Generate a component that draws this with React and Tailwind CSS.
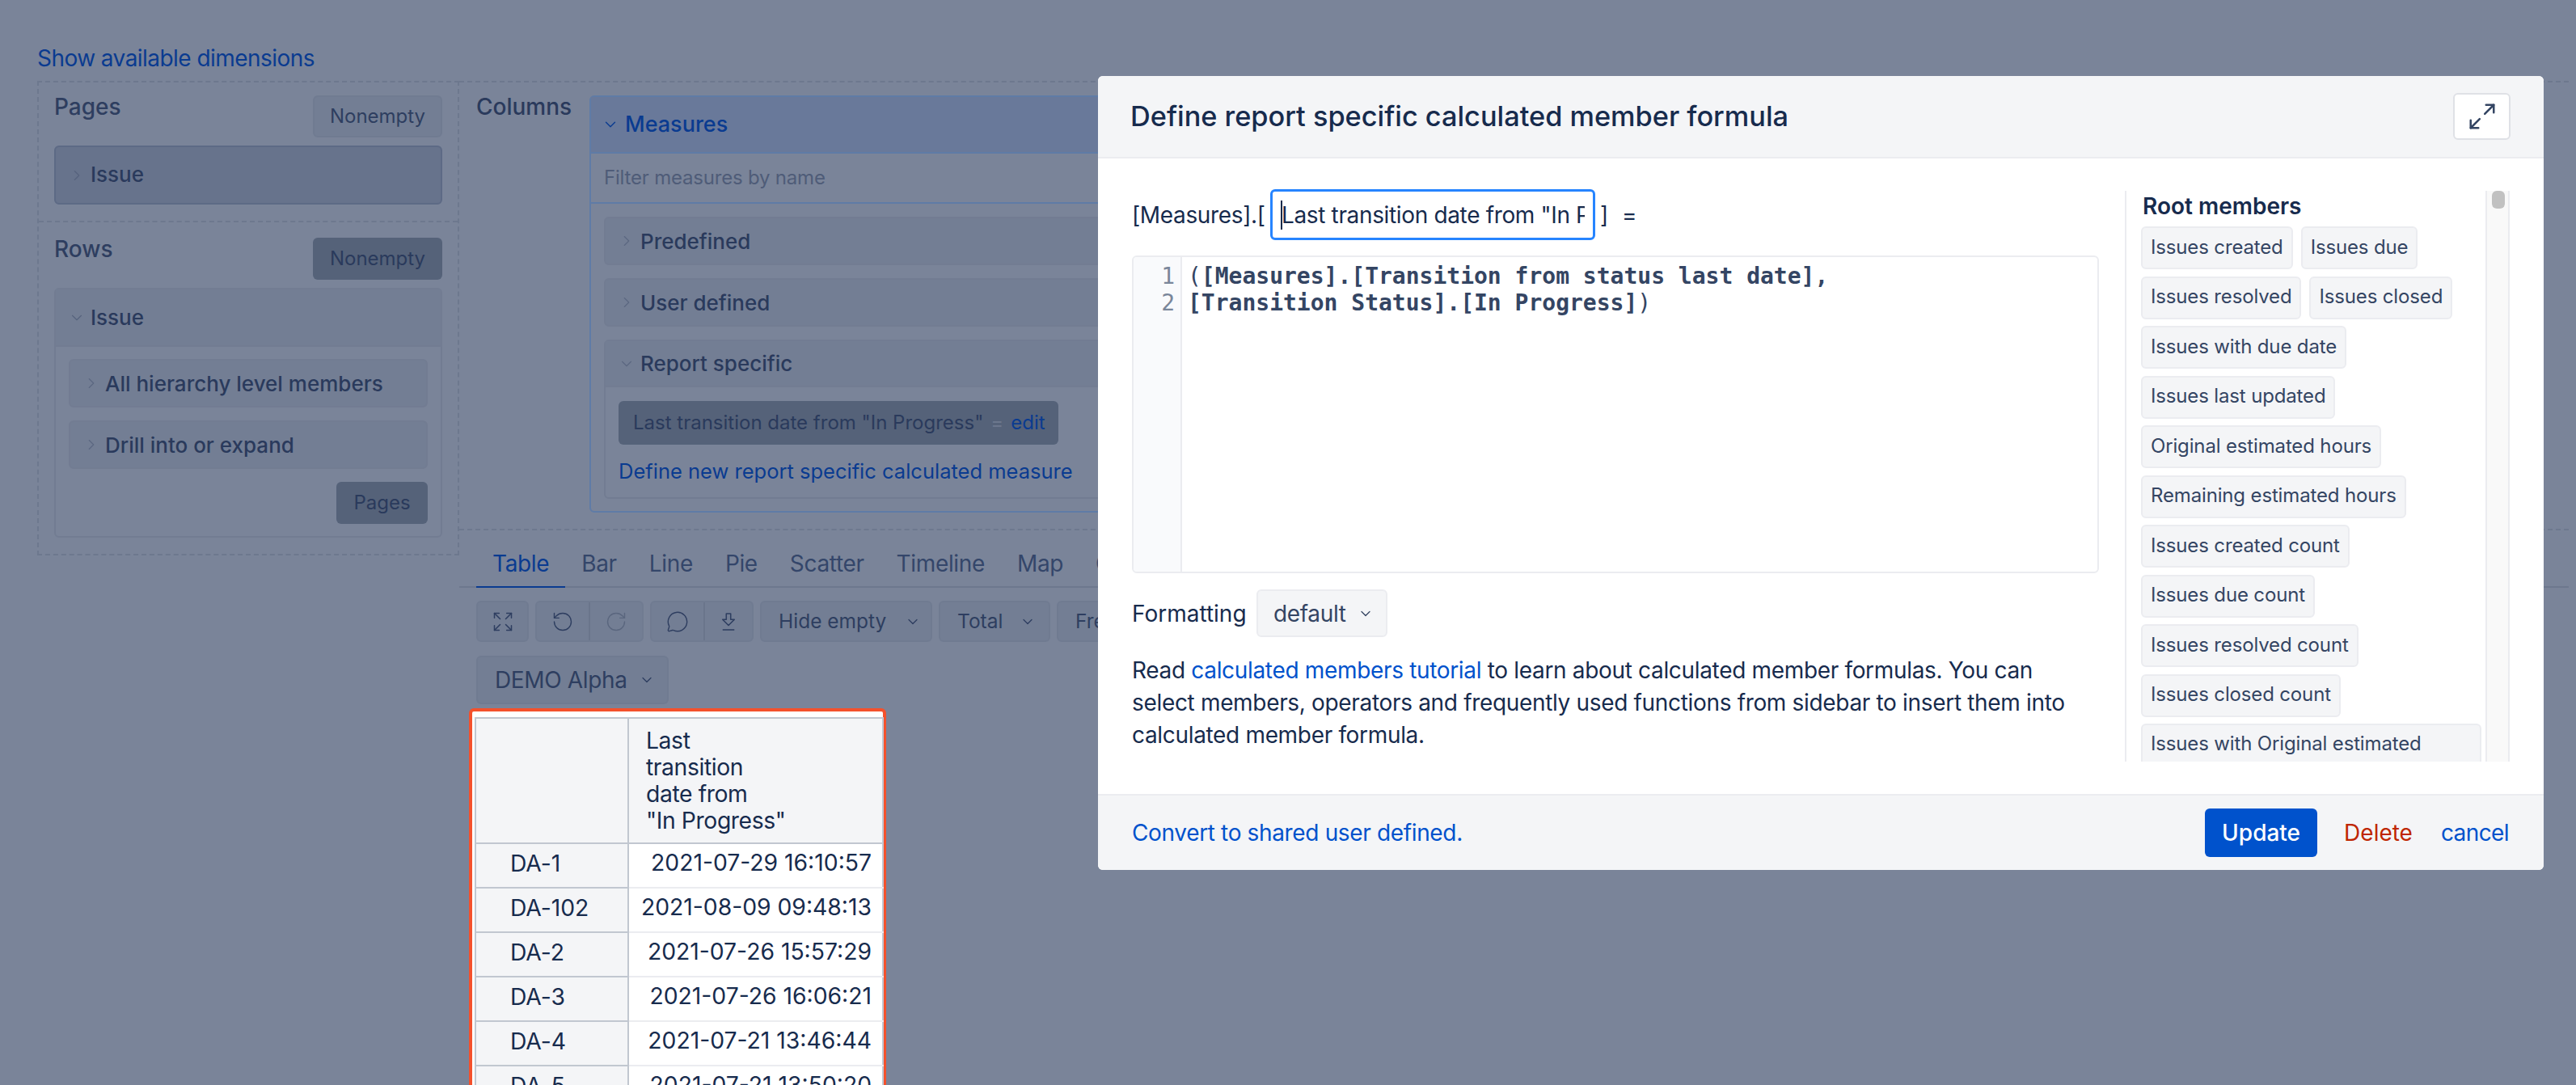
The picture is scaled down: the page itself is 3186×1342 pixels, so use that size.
import React from "react";
import { ChevronRight, ChevronDown, Expand, RotateCcw, RotateCw, MessageCircle, Maximize2 } from "lucide-react";

const DimText = "text-[#2a3a5c]";

function Block({ label, className = "" }) {
  return (
    <div className={"flex items-center border-2 border-[#727c92] rounded-[6px] bg-[#737e94] " + className}>
      <ChevronRight className="w-[22px] h-[22px] ml-[15px] text-[#5b6780] shrink-0" strokeWidth={1.2} />
      <span className="ml-[6px] text-[26px] text-[#2a3a5c] font-medium">{label}</span>
    </div>
  );
}

function ToolBtn({ children, className = "" }) {
  return (
    <div className={"flex items-center h-[51px] rounded-[6px] border-2 border-[#707b91] bg-[#737e94] text-[#2e3e60] " + className}>
      {children}
    </div>
  );
}

const rows = [
  ["DA-1", "2021-07-29 16:10:57"],
  ["DA-102", "2021-08-09 09:48:13"],
  ["DA-2", "2021-07-26 15:57:29"],
  ["DA-3", "2021-07-26 16:06:21"],
  ["DA-4", "2021-07-21 13:46:44"],
  ["DA-5", "2021-07-21 13:50:20"],
];

const chips = [
  "Issues created",
  "Issues due",
  "Issues resolved",
  "Issues closed",
  "Issues with due date",
  "Issues last updated",
  "Original estimated hours",
  "Remaining estimated hours",
  "Issues created count",
  "Issues due count",
  "Issues resolved count",
  "Issues closed count",
];

function Background() {
  return (
    <div className="pl-[46px] pt-[54px]">
      <a className="block h-[46px] leading-[36px] text-[28px] tracking-[-0.55px] text-[#0a3b90]">Show available dimensions</a>
      <div className="flex items-start">
        {/* left column */}
        <div className="w-[522px] h-[587px] border-2 border-dashed border-[#6d788e] shrink-0">
          <div className="h-[173px] border-b-2 border-dashed border-[#6d788e] px-[19px] pt-[16px]">
            <div className="flex justify-between">
              <span className="text-[28px] leading-[28px] text-[#2e3e60] font-medium">Pages</span>
              <div className="flex items-center justify-center w-[160px] h-[52px] rounded-[6px] border-2 border-[#707b91] bg-[#737e94] text-[24px] text-[#2e3e60]">Nonempty</div>
            </div>
            <div className="mt-[10px] flex items-center h-[73px] rounded-[6px] border-2 border-[#5d6a85] bg-[#67738c]">
              <ChevronRight className="w-[22px] h-[22px] ml-[15px] text-[#56637d]" strokeWidth={1.2} />
              <span className="ml-[6px] text-[26px] pb-[2px] text-[#2a3a5c] font-medium">Issue</span>
            </div>
          </div>
          <div className="px-[19px] pt-[19px]">
            <div className="flex justify-between">
              <span className="text-[28px] leading-[28px] text-[#2e3e60] font-medium">Rows</span>
              <div className="flex items-center justify-center w-[160px] h-[52px] rounded-[6px] bg-[#556279] text-[24px] text-[#2a3a5c]">Nonempty</div>
            </div>
            <div className="mt-[10px] h-[309px] rounded-[6px] border-2 border-[#727c92]">
              <div className="flex items-center h-[71px] bg-[#737e94] border-b-2 border-[#727c92]">
                <ChevronDown className="w-[22px] h-[22px] ml-[15px] text-[#56637d]" strokeWidth={1.2} />
                <span className="ml-[6px] text-[26px] text-[#2a3a5c] font-medium">Issue</span>
              </div>
              <div className="px-[16px] pt-[15px]">
                <Block label="All hierarchy level members" className="h-[60px]" />
                <Block label="Drill into or expand" className="h-[60px] mt-[16px]" />
                <div className="flex justify-end mt-[16px]">
                  <div className="flex items-center justify-center w-[113px] h-[52px] rounded-[6px] bg-[#556279] text-[24px] text-[#2a3a5c]">Pages</div>
                </div>
              </div>
            </div>
          </div>
        </div>

        {/* right column */}
        <div className="w-[2609px] shrink-0">
          <div className="h-[556px] border-y-2 border-dashed border-[#6d788e] pl-[21px] pt-[16px] flex">
            <div className={"w-[140px] text-[28px] leading-[28px] font-medium " + DimText}>Columns</div>
            <div className="w-[1500px] h-[516px] rounded-[6px] border-2 border-[#5f7ba6]">
              <div className="flex items-center h-[70px] bg-[#69799a] border-b-2 border-[#5f7ba6]">
                <ChevronDown className="w-[22px] h-[22px] ml-[13px] text-[#0a3b90]" strokeWidth={1.5} />
                <span className="ml-[7px] text-[27px] font-medium text-[#0a3b90]">Measures</span>
              </div>
              <div className="flex items-center h-[62px] border-b-2 border-[#5f7ba6] pl-[16px] text-[24px] tracking-[-0.2px] text-[#4f5c78]">Filter measures by name</div>
              <div className="px-[16px] pt-[16px]">
                <Block label="Predefined" className="h-[60px]" />
                <Block label="User defined" className="h-[60px] mt-[16px]" />
                <div className="mt-[16px] h-[197px] rounded-[6px] border-2 border-[#727c92]">
                  <div className="flex items-center h-[57px] bg-[#737e94] border-b-2 border-[#727c92]">
                    <ChevronDown className="w-[22px] h-[22px] ml-[15px] text-[#5b6780]" strokeWidth={1.2} />
                    <span className="ml-[6px] text-[26px] text-[#2a3a5c] font-medium">Report specific</span>
                  </div>
                  <div className="pl-[16px] pt-[17px]">
                    <div className="flex items-center w-[544px] h-[54px] pl-[18px] rounded-[6px] bg-[#556279] text-[24px] whitespace-nowrap text-[#2a3a5c]">
                      Last transition date from "In Progress"<span className="ml-[9px] text-[#6c778d]">=</span><span className="ml-[9px] text-[#0a3b90]">edit</span>
                    </div>
                    <a className="block mt-[18px] leading-[30px] text-[25.5px] whitespace-nowrap text-[#0a3b90]">Define new report specific calculated measure</a>
                  </div>
                </div>
              </div>
            </div>
          </div>

          <div className="flex h-[71px] border-b-2 border-[#6d788e] pl-[21px] tracking-[-0.35px]">
            {["Table", "Bar", "Line", "Pie", "Scatter", "Timeline", "Map", "Calendar"].map((t, i) => (
              <div key={t} className={"px-[20px] pt-[24px] text-[28px] leading-[34px] " + (i === 0 ? "text-[#0a3b90] border-b-2 border-[#0a3b90] h-[71px]" : "text-[#34466a]")}>{t}</div>
            ))}
          </div>

          <div className="flex gap-[8px] mt-[16px] pl-[21px]">
            <ToolBtn className="w-[65px] justify-center"><Expand className="w-[28px] h-[28px]" strokeWidth={1.3} /></ToolBtn>
            <ToolBtn className="w-[134px]">
              <div className="w-[66px] h-full flex items-center justify-center border-r-2 border-[#6a758b]"><RotateCcw className="w-[28px] h-[28px]" strokeWidth={1.2} /></div>
              <div className="flex-1 flex items-center justify-center text-[#5a667e]"><RotateCw className="w-[28px] h-[28px]" strokeWidth={1.2} /></div>
            </ToolBtn>
            <ToolBtn className="w-[128px]">
              <div className="w-[66px] h-full flex items-center justify-center border-r-2 border-[#6a758b]"><MessageCircle className="w-[28px] h-[28px]" strokeWidth={1.2} /></div>
              <div className="flex-1 flex items-center justify-center">
                <svg width="20" height="24" viewBox="0 0 22 26" fill="none" stroke="currentColor" strokeWidth="1.7" strokeLinejoin="round">
                  <path d="M8 2h6v8h5l-8 8-8-8h5z" />
                  <path d="M3 24h16" />
                </svg>
              </div>
            </ToolBtn>
            <ToolBtn className="w-[213px] pl-[21px] text-[24.5px]">Hide empty<ChevronDown className="w-[20px] h-[20px] ml-[23px]" strokeWidth={1.5} /></ToolBtn>
            <ToolBtn className="w-[138px] pl-[21px] text-[24.5px]">Total<ChevronDown className="w-[20px] h-[20px] ml-[21px]" strokeWidth={1.5} /></ToolBtn>
            <ToolBtn className="w-[200px] pl-[21px] text-[24.5px]">Freeze</ToolBtn>
          </div>

          <div className="pl-[21px] mt-[17px]">
            <div className="flex items-center w-[238px] h-[60px] pl-[21px] rounded-[6px] border-2 border-[#707b91] bg-[#737e94] text-[28px] tracking-[-0.35px] text-[#2e3e60]">DEMO Alpha<ChevronDown className="w-[20px] h-[20px] ml-[14px]" strokeWidth={1.5} /></div>
          </div>

          <div className="ml-[12px] mt-[5px] w-[516px] border-4 border-[#f4512c] rounded-[6px] bg-white px-[3px] pt-[7px]">
            <table className="w-[504px] table-fixed border-collapse text-[28.3px] text-[#172b4d]">
              <colgroup><col className="w-[189px]" /><col className="w-[315px]" /></colgroup>
              <thead>
                <tr className="h-[155px] bg-[#f4f5f7]">
                  <th className="border-2 border-[#c1c7d0]"></th>
                  <th className="border-2 border-[#c1c7d0] pl-[21px] text-left font-normal leading-[33px] tracking-[-0.4px]">Last<br />transition<br />date from<br />"In Progress"</th>
                </tr>
              </thead>
              <tbody>
                {rows.map(([a, b]) => (
                  <tr key={a} className="h-[55px]">
                    <td className="bg-[#f4f5f7] border-2 border-[#c1c7d0] pl-[42px] pb-[4px] tracking-[-0.1px]">{a}</td>
                    <td className="border-2 border-y-[#ebecf0] border-l-[#c1c7d0] border-r-[#c1c7d0] pr-[13px] pb-[7px] text-right">{b}</td>
                  </tr>
                ))}
              </tbody>
            </table>
          </div>
        </div>
      </div>
    </div>
  );
}

function Modal() {
  return (
    <div className="absolute left-[1358px] top-[94px] w-[1788px] h-[982px] rounded-[6px] bg-white flex flex-col overflow-hidden text-[#172b4d]">
      <div className="h-[102px] shrink-0 flex items-center justify-between pl-[40px] pr-[41px] bg-[#f4f5f7] border-b-2 border-[#ebecf0]">
        <span className="text-[34.3px] font-medium whitespace-nowrap">Define report specific calculated member formula</span>
        <div className="flex items-center justify-center w-[71px] h-[58px] rounded-[6px] bg-white border-2 border-[#dfe1e6] text-[#344563]">
          <Maximize2 className="w-[38px] h-[38px]" strokeWidth={1.6} />
        </div>
      </div>

      <div className="h-[786px] shrink-0 flex pt-[40px] pl-[42px]">
        <div className="w-[1196px] shrink-0 -mt-[2px]">
          <div className="flex items-center h-[63px] text-[28px] tracking-[-0.35px] whitespace-nowrap">
            <span className="w-[171px]">[Measures].[</span>
            <div className="w-[402px] h-[63px] rounded-[6px] border-[3px] border-[#2684ff] overflow-hidden flex items-center pl-[10px] pr-[10px]">
              <span className="block w-[2px] h-[36px] -mr-[1px] bg-[#172b4d] shrink-0"></span>
              <span className="block overflow-hidden">Last transition date from "In Progress"</span>
            </div>
            <span className="ml-[6px]">]</span>
            <span className="ml-[17px]">=</span>
          </div>
          <div className="mt-[19px] h-[393px] rounded-[6px] border-2 border-[#ebecf0] flex overflow-hidden">
            <div className="w-[60px] bg-[#f9fafc] border-r-2 border-[#ebecf0] pt-[7px] pr-[7px] text-right font-['DejaVu_Sans_Mono',monospace] text-[28px] leading-[33px] text-[#7a869a]">1<br />2</div>
            <div className="pl-[7px] pt-[7px] font-['DejaVu_Sans_Mono',monospace] font-bold text-[28px] leading-[33px] text-[#344563] whitespace-pre"><span className="font-normal">(</span>[Measures].[Transition from status last date],{"\n"}[Transition Status].[In Progress]<span className="font-normal">)</span></div>
          </div>
          <div className="mt-[20px] flex items-center h-[59px] text-[28px]">
            <span className="w-[154px]">Formatting</span>
            <div className="flex items-center w-[162px] h-[59px] pl-[19px] rounded-[6px] bg-[#f4f5f7] border-2 border-[#ebecf0] text-[#344563] tracking-[-0.35px]">default<ChevronDown className="w-[20px] h-[20px] ml-[14px]" strokeWidth={1.5} /></div>
          </div>
          <p className="mt-[21px] text-[28px] leading-[40px] tracking-[-0.33px]">
            Read <a className="text-[#0052cc]">calculated members tutorial</a> to learn about calculated member formulas. You can select members, operators and frequently used functions from sidebar to insert them into calculated member formula.
          </p>
        </div>

        <div className="ml-[32px] w-[476px] h-[706px] border-l-2 border-[#ebecf0] flex overflow-hidden">
          <div className="w-[444px] shrink-0 pl-[18px] overflow-hidden">
            <div className="h-[44px] leading-[38px] text-[28px] font-semibold pl-[2px]">Root members</div>
            <div className="flex flex-wrap gap-x-[10px] gap-y-[8.5px] w-[423px] tracking-[-0.15px]">
              {chips.map((c) => (
                <div key={c} className="flex items-center h-[53px] pb-[2px] px-[10px] rounded-[6px] border-2 border-[#ebecf0] bg-[#f4f5f7] text-[24px] text-[#344563] whitespace-nowrap">{c}</div>
              ))}
              <div className="w-[421px] px-[10px] pt-[6px] pb-[8px] rounded-[6px] border-2 border-[#ebecf0] bg-[#f4f5f7] text-[24px] leading-[34px] text-[#344563]">Issues with Original estimated hours</div>
            </div>
          </div>
          <div className="w-[30px] h-full bg-[#f9f9f9] border-x-2 border-[#ebecf0] shrink-0 pl-[6px]">
            <div className="w-[16px] h-[22px] rounded-[6px] bg-[#c1c1c1]"></div>
          </div>
        </div>
      </div>

      <div className="flex-1 flex items-center justify-between pl-[42px] pr-[43px] bg-[#f4f5f7] border-t-2 border-[#ebecf0] text-[28px]">
        <a className="text-[#0052cc] tracking-[-0.35px]">Convert to shared user defined.</a>
        <div className="flex items-center">
          <div className="flex items-center justify-center w-[139px] h-[60px] rounded-[6px] bg-[#0052cc] text-white font-medium">Update</div>
          <a className="ml-[33px] text-[#bf2600]">Delete</a>
          <a className="ml-[35px] text-[#0052cc] tracking-[-0.6px]">cancel</a>
        </div>
      </div>
    </div>
  );
}

export default function App() {
  return (
    <div className="relative w-[3186px] h-[1342px] overflow-hidden bg-[#7a8499] font-['Inter',sans-serif]">
      <Background />
      <Modal />
    </div>
  );
}
